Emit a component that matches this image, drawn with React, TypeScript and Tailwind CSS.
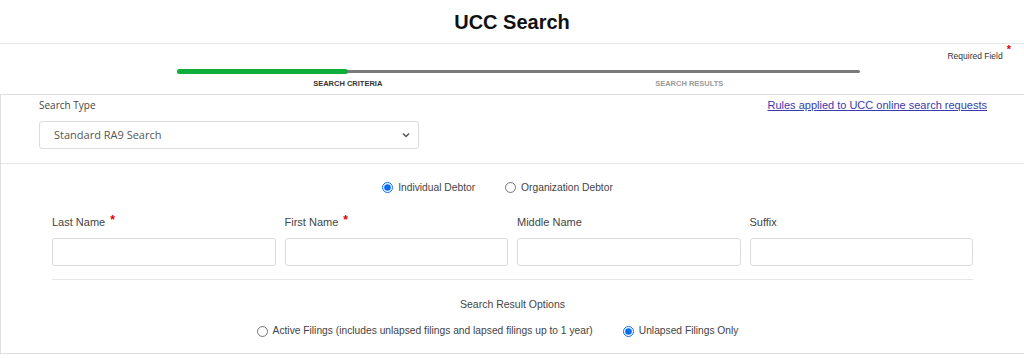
import { useState } from "react";

function Radio({ checked, label, onChange }: { checked: boolean; label: string; onChange: () => void }) {
  return (
    <label className="mr-[30px] flex items-center gap-[5px] text-[10.25px] text-[#444]">
      <input
        type="radio"
        checked={checked}
        onChange={onChange}
        className="m-0 h-[11px] w-[11px] accent-[#0a6cf5]"
      />
      <span>{label}</span>
    </label>
  );
}

function Field({ label, required }: { label: string; required?: boolean }) {
  return (
    <div className="flex flex-col">
      <div className="flex items-start gap-[5px] text-[11px] leading-[15px] text-[#444]">
        <span>{label}</span>
        {required && <span className="-mt-[2px] text-[12px] font-bold text-[#e00000]">*</span>}
      </div>
      <input
        type="text"
        className="mt-[8px] h-[28px] w-full rounded-[3px] border border-[#dcdcdc] bg-white px-2 text-[12px] outline-none"
      />
    </div>
  );
}

export default function App() {
  const [debtor, setDebtor] = useState("individual");
  const [option, setOption] = useState("unlapsed");

  return (
    <div className="min-h-[358px] w-full bg-white font-['Liberation_Sans',Arial,sans-serif] text-[#333]">
      <div className="flex h-[44px] items-center justify-center border-b border-[#e6e6e6]">
        <h1 className="text-[20px] font-bold text-[#111]">UCC Search</h1>
      </div>

      <div className="h-[50px]">
        <div className="flex justify-end pr-[13px] pt-[7px]">
          <span className="text-[8.5px] leading-[11px] text-[#333]">Required Field</span>
          <span className="-mt-[7px] ml-[4px] text-[11px] font-bold leading-[11px] text-[#e00000]">*</span>
        </div>
        <div className="ml-[177px] mt-[7px] w-[683px]">
          <div className="relative flex h-[5px] items-center">
            <div className="h-[3px] w-full rounded-full bg-[#7a7a7a]" />
            <div className="absolute left-0 top-0 h-[5px] w-1/4 rounded-full bg-[#11ad3b]" />
          </div>
          <div className="mt-[5px] grid grid-cols-2 text-center text-[7.5px] font-bold leading-[9px]">
            <span className="text-[#333]">SEARCH CRITERIA</span>
            <span className="text-[#999]">SEARCH RESULTS</span>
          </div>
        </div>
      </div>

      <div className="border-y border-l border-[#dedede]">
        <div className="flex justify-between border-b border-[#e6e6e6] pb-[14px] pl-[38px] pr-[37px] pt-[3px]">
          <div className="flex flex-col">
            <span className="font-['Open_Sans',sans-serif] text-[10px] leading-[14px] text-[#444]">Search Type</span>
            <div className="relative mt-[9px] w-[380px]">
              <select className="h-[28px] w-full appearance-none rounded-[3px] border border-[#dcdcdc] bg-white pl-[14px] font-['Open_Sans',sans-serif] text-[11px] text-[#555] outline-none">
                <option>Standard RA9 Search</option>
              </select>
              <svg
                className="pointer-events-none absolute right-[9px] top-[11px]"
                width="8"
                height="6"
                viewBox="0 0 8 6"
                fill="none"
              >
                <path d="M1 1.5 4 4.5 7 1.5" stroke="#555" strokeWidth="1.5" />
              </svg>
            </div>
          </div>
          <a href="#" className="text-[11px] leading-[14px] text-[#3a3ab0] underline">
            Rules applied to UCC online search requests
          </a>
        </div>

        <div className="px-[51px] pb-[14px] pt-[16px]">
          <div className="flex justify-center">
            <Radio checked={debtor === "individual"} label="Individual Debtor" onChange={() => setDebtor("individual")} />
            <Radio checked={debtor === "organization"} label="Organization Debtor" onChange={() => setDebtor("organization")} />
          </div>

          <div className="mt-[20px] grid grid-cols-4 gap-[9px]">
            <Field label="Last Name" required />
            <Field label="First Name" required />
            <Field label="Middle Name" />
            <Field label="Suffix" />
          </div>

          <div className="mt-[13px] border-t border-[#e6e6e6]" />

          <p className="mt-[17px] text-center text-[10.5px] leading-[14px] text-[#444]">Search Result Options</p>

          <div className="mt-[12px] flex justify-center">
            <Radio
              checked={option === "active"}
              label="Active Filings (includes unlapsed filings and lapsed filings up to 1 year)"
              onChange={() => setOption("active")}
            />
            <Radio checked={option === "unlapsed"} label="Unlapsed Filings Only" onChange={() => setOption("unlapsed")} />
          </div>
        </div>
      </div>
    </div>
  );
}
